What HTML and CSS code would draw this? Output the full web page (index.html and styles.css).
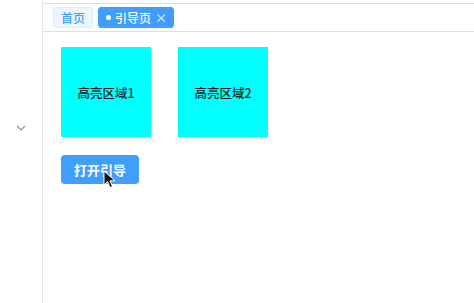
FILE: index.html
```html
<!DOCTYPE html>
<html lang="zh-CN">
<head>
    <meta charset="UTF-8">
    <meta name="viewport" content="width=device-width, initial-scale=1.0">
    <title>引导页</title>
    <link rel="stylesheet" href="styles.css">
</head>
<body>
    <div class="layout">
        <div class="sidebar">
            <svg class="chevron" width="10" height="6" viewBox="0 0 10 6">
                <path d="M1 1 L5 5 L9 1" fill="none" stroke="#8a8f99" stroke-width="1.2"/>
            </svg>
        </div>
        <div class="main">
            <div class="tabs">
                <span class="tab">首页</span>
                <span class="tab active"><i class="dot"></i>引导页<span class="close">×</span></span>
            </div>
            <div class="content">
                <div class="boxes">
                    <div class="box">高亮区域1</div>
                    <div class="box">高亮区域2</div>
                </div>
                <div class="btn-wrap">
                    <button class="btn">打开引导</button>
                    <svg class="cursor" width="14" height="20" viewBox="0 0 14 20">
                        <path d="M1 1 L1 15 L4.5 11.5 L7 17.5 L9.5 16.5 L7 10.8 L12 10.8 Z" fill="#111" stroke="#fff" stroke-width="1"/>
                    </svg>
                </div>
            </div>
        </div>
    </div>
</body>
</html>
```

FILE: styles.css
```css
html, body {
    margin: 0;
    background: #fff;
    font-family: "Noto Sans CJK SC", "Liberation Sans", sans-serif;
}
.layout {
    display: flex;
    height: 303px;
}
.sidebar {
    width: 43px;
    border-right: 1px solid #e2e2e2;
    display: flex;
    justify-content: center;
    padding-top: 125px;
    box-sizing: border-box;
}
.chevron {
    display: block;
    margin-left: -1px;
}
.main {
    flex: 1;
    padding-top: 3px;
}
.tabs {
    display: flex;
    align-items: center;
    gap: 5px;
    height: 29px;
    padding-left: 10px;
    border-top: 1px solid #e0e0e0;
    border-bottom: 1px solid #e0e0e0;
    box-sizing: border-box;
}
.tab {
    display: flex;
    align-items: center;
    height: 21px;
    padding: 0 7px;
    font-size: 12px;
    font-weight: 500;
    border-radius: 3px;
    color: #409eff;
    background: #ecf5ff;
    border: 1px solid #d9ecff;
    box-sizing: border-box;
}
.tab.active {
    background: #409eff;
    border-color: #409eff;
    color: #fff;
    padding: 0 6px 0 7px;
}
.dot {
    width: 5px;
    height: 5px;
    border-radius: 50%;
    background: #fff;
    margin-right: 4px;
}
.close {
    margin-left: 4px;
    font-size: 12px;
    opacity: 0.85;
}
.content {
    padding: 15px 18px;
}
.boxes {
    display: flex;
    gap: 27px;
}
.box {
    width: 90px;
    height: 90px;
    background: #00ffff;
    display: flex;
    align-items: center;
    justify-content: center;
    font-size: 12.5px;
    font-weight: 500;
    color: #1a1a1a;
}
.btn-wrap {
    position: relative;
    margin-top: 18px;
    width: 78px;
}
.btn {
    display: block;
    width: 78px;
    height: 29px;
    border: none;
    border-radius: 4px;
    background: #409eff;
    color: #fff;
    font-family: inherit;
    font-size: 13px;
    font-weight: bold;
    padding: 0;
}
.cursor {
    position: absolute;
    left: 42px;
    top: 15px;
}
```
